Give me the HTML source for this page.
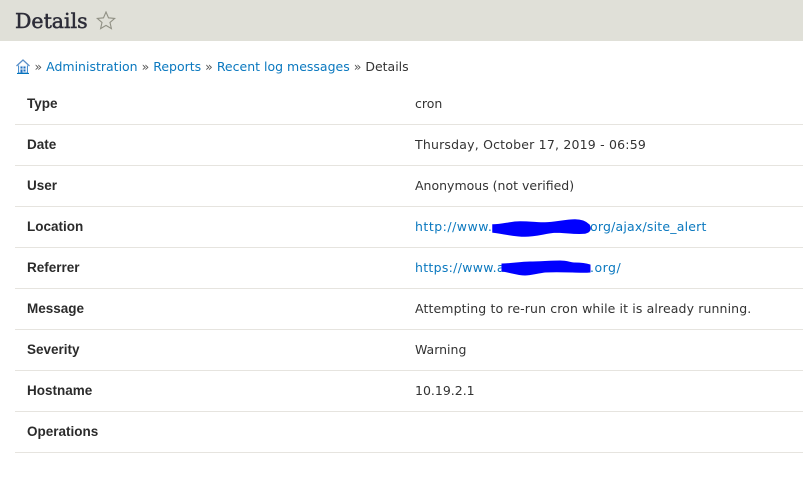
<!DOCTYPE html>
<html><head><meta charset="utf-8"><style>
html,body{margin:0;padding:0;background:#fff;width:803px;height:491px;overflow:hidden}
body{position:relative;font-family:"DejaVu Sans","Liberation Sans",sans-serif;font-size:12.5px;color:#333}
.hd{position:absolute;left:0;top:0;width:803px;height:41px;background:#e0e0d8}
.t{position:absolute;left:15px;top:6px;font-family:"DejaVu Serif","Liberation Serif",serif;font-size:20.5px;font-weight:400;color:#2d2d38;line-height:30px;white-space:nowrap;-webkit-text-stroke:.5px #2d2d38}
.bc{position:absolute;left:34.500px;top:58px;line-height:18px;white-space:nowrap;color:#333}
.bc a,.v a{color:#0a78bf;text-decoration:none}
.bc i{font-style:normal;color:#555}
.r{position:absolute;left:15px;width:788px;height:40px;border-bottom:1px solid #e6e4df}
.k{position:absolute;left:12px;top:12px;font:bold 13.500px/16px "Liberation Sans",sans-serif;color:#2b2b2b}
.v{position:absolute;left:400px;top:12px;line-height:16px;white-space:nowrap}
.v a span{position:absolute;top:0}
svg{position:absolute}
</style></head><body>
<div class="hd"></div>
<div class="t">Details</div>
<svg style="left:96px;top:11px" width="20" height="19" viewBox="0 0 20 19"><path d="M10 1l2.500 5.800 6.200.6-4.700 4.100 1.400 6.100L10 14.400l-5.400 3.200 1.400-6.100L1.300 7.400l6.200-.6z" fill="none" stroke="#909084" stroke-width="1.100"/></svg>
<svg style="left:16px;top:59px" width="14" height="15" viewBox="0 0 14 15"><path d="M.5 7L7 1l6.500 6" fill="none" stroke="#5a8fc8" stroke-width="1.300"/><path d="M2.500 6.500v7.500h9V6.500" fill="#eef4fb" stroke="#4a90d0" stroke-width="1"/><path d="M4.500 7.500h2v2h-2zM7.500 7.500h2v2h-2zM4.500 10.500h2v3h-2zM7.500 10.500h2v2h-2z" fill="#1f6fc0"/><path d="M1 14.500h12" stroke="#0074bd" stroke-width="1.200"/></svg>
<div class="bc"><i>»</i> <a href="#">Administration</a> <i>»</i> <a href="#">Reports</a> <i>»</i> <a href="#">Recent log messages</a> <i>»</i> Details</div>
<div class="r" style="top:84px"><div class="k">Type</div><div class="v">cron</div></div>
<div class="r" style="top:125px"><div class="k">Date</div><div class="v" style="letter-spacing:.2px">Thursday, October 17, 2019 - 06:59</div></div>
<div class="r" style="top:166px"><div class="k">User</div><div class="v">Anonymous (not verified)</div></div>
<div class="r" style="top:207px"><div class="k">Location</div><div class="v"><a href="#"><span style="left:0;letter-spacing:.5px">http://www.</span><span style="left:175px;letter-spacing:.2px">org/ajax/site_alert</span></a></div></div>
<div class="r" style="top:248px"><div class="k">Referrer</div><div class="v"><a href="#"><span style="left:0;letter-spacing:.3px">https://www.a</span><span style="left:175px;letter-spacing:.5px">.org/</span></a></div></div>
<div class="r" style="top:289px"><div class="k">Message</div><div class="v" style="letter-spacing:.12px">Attempting to re-run cron while it is already running.</div></div>
<div class="r" style="top:330px"><div class="k">Severity</div><div class="v">Warning</div></div>
<div class="r" style="top:371px"><div class="k">Hostname</div><div class="v">10.19.2.1</div></div>
<div class="r" style="top:412px"><div class="k">Operations</div></div>
<svg style="left:0;top:0" width="803" height="491"><path d="M493 225C503 225 510 222 520 222C530 222 538 223 545 223C555 223 565 220 575 220C582 220 586 222 589 225C591 229 590 232 585 233C575 234 565 232 555 232C545 233 535 236 525 236C513 236 503 233 493 232Z" fill="#0000ff" stroke="#0000ff" stroke-width="1.500"/><path d="M502 264C512 264 520 262 530 262C540 262 550 261 560 261C567 261 571 263 575 263C581 263 587 264 590 265L590 272C580 273 565 271 545 272C537 273 531 275 525 275C517 275 510 272 502 271Z" fill="#0000ff" stroke="#0000ff" stroke-width="1"/></svg>
</body></html>
